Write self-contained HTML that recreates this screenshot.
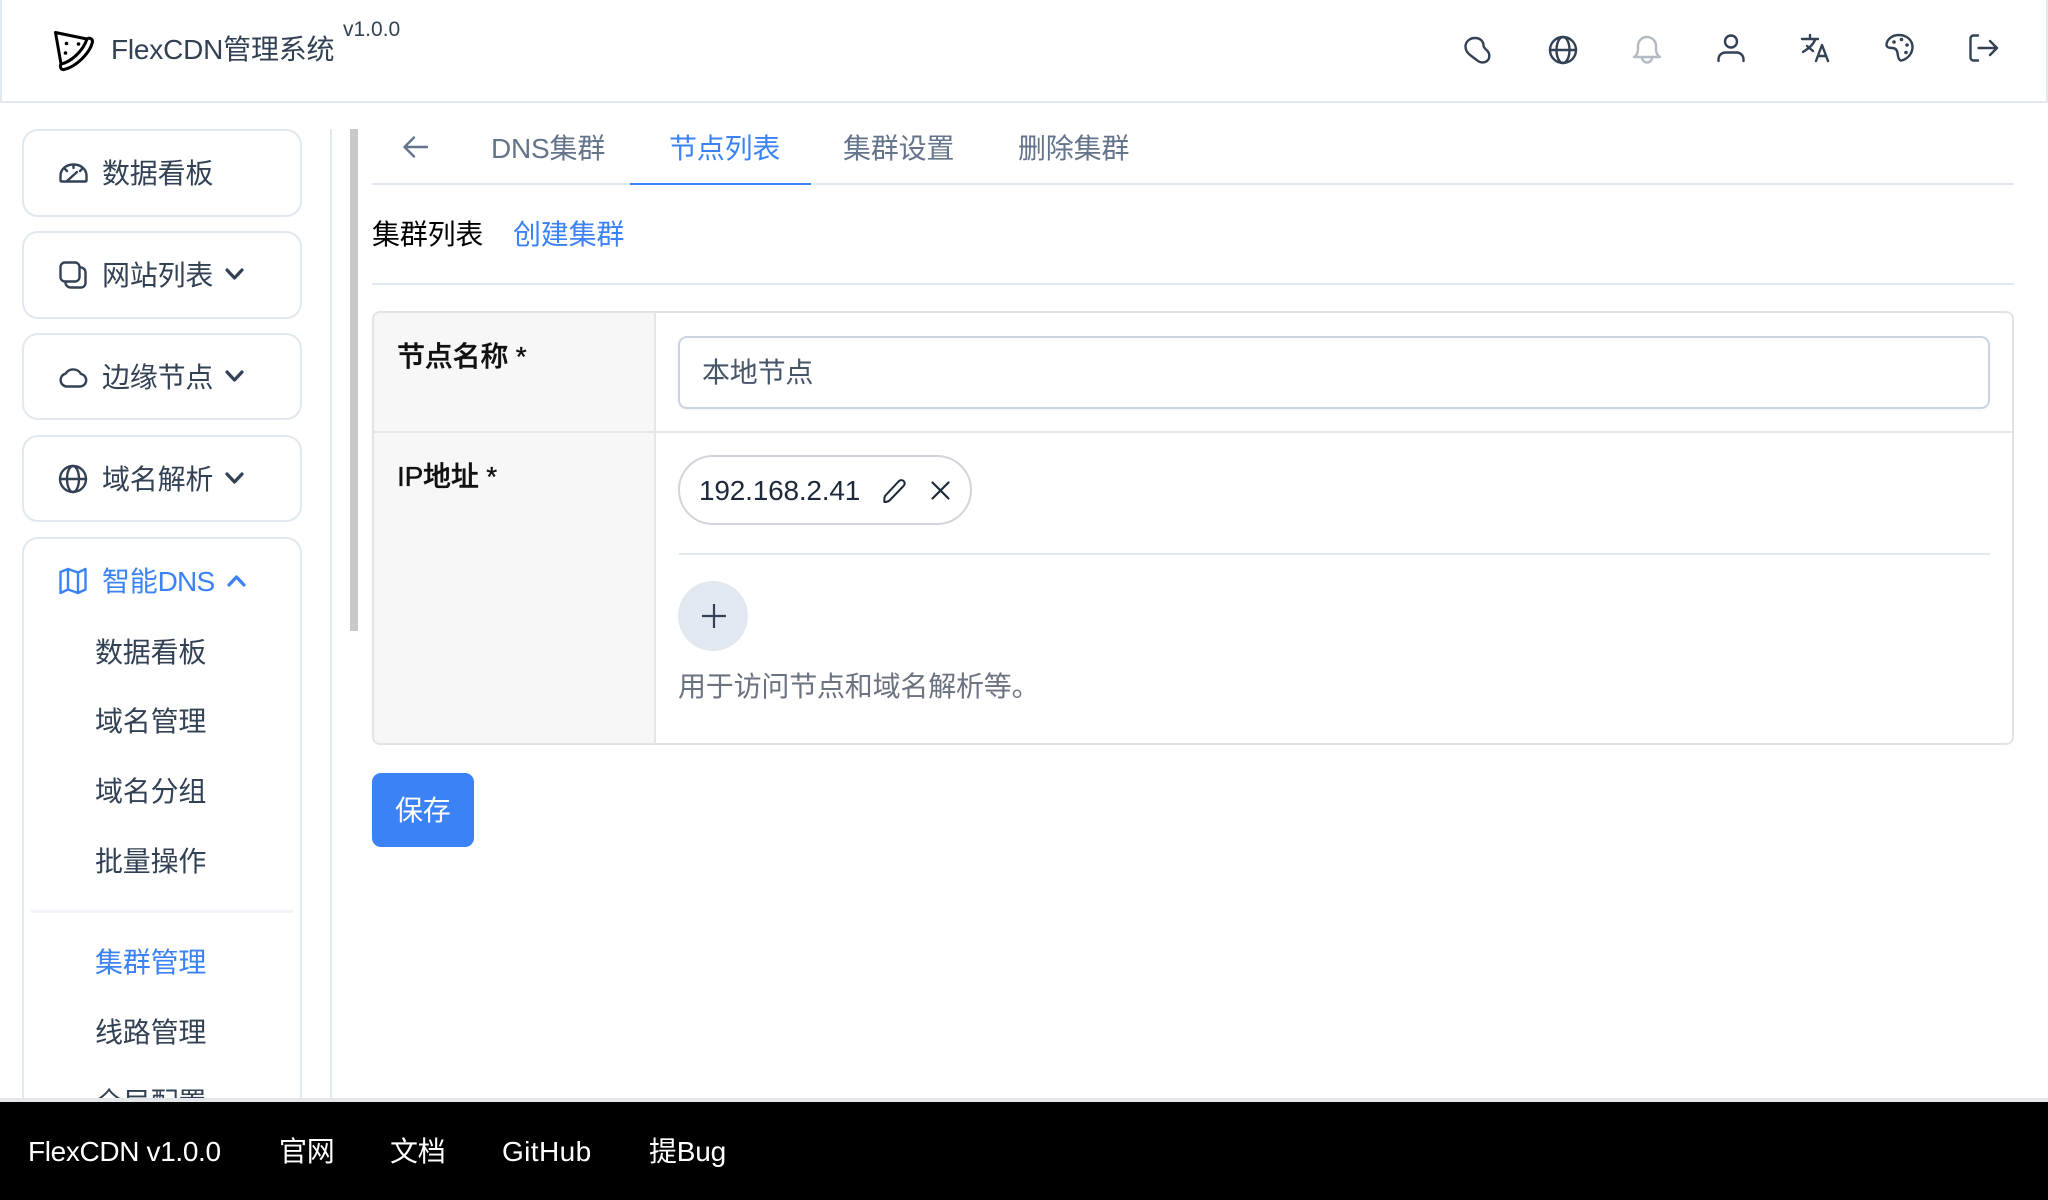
<!DOCTYPE html>
<html lang="zh-CN"><head><meta charset="utf-8"><title>FlexCDN管理系统</title>
<style>
*{box-sizing:border-box;margin:0;padding:0}
html,body{width:2048px;height:1200px;overflow:hidden;background:#fff}
body{position:relative;font-family:"Liberation Sans","Noto Sans CJK SC",sans-serif;font-size:28px;color:#334155}
.a{position:absolute}
.t{position:absolute;line-height:40px;height:40px;white-space:nowrap;margin-top:1px;letter-spacing:-.2px}
svg{position:absolute;fill:none;stroke:#334155;stroke-width:2.4;stroke-linecap:round;stroke-linejoin:round;overflow:visible}
.box{position:absolute;left:22px;width:280px;border:2px solid #e2e8f0;border-radius:16px;background:#fff}
.blue{color:#3b82f6}
.lb{color:#111;font-weight:500;-webkit-text-stroke:.35px #111}
</style></head><body>

<!-- header -->
<div class="a" style="left:0;top:0;width:2048px;height:103px;border:2px solid #e2e8f0;border-top:0"></div>
<svg style="left:54px;top:31px;stroke:#000;stroke-width:3" width="40" height="40" viewBox="0 0 40 40"><path d="M1.500 1.500 L33 8 C35 6 39 8 38.500 11 C36 22 22 36 10 38.500 C7 39 5.500 36 7 33 Z"/><path d="M7 33 C17 31 29 20 33 8"/><g fill="#000" stroke="none"><circle cx="12.500" cy="12.500" r="1.800"/><circle cx="24.500" cy="13" r="1.800"/><circle cx="11.500" cy="22" r="1.800"/></g></svg>
<div class="t" style="left:111px;top:29px;letter-spacing:-.2px">FlexCDN管理系统</div>
<div class="t" style="left:343px;top:9px;font-size:21px;letter-spacing:0">v1.0.0</div>

<svg style="left:1465px;top:37px" width="26" height="27" viewBox="0 0 26 27"><path d="M10 1 C15.500 1 18.500 4.500 18.500 8.500 C18.500 10.500 20 11.500 22 13.500 C25 16.500 25 21 22.500 23.500 C20 26 15.500 26 13 24 C10 21.500 6.500 19.500 3.500 16.500 C1.500 14.500 .5 12 .5 9.500 C.5 4.500 5 1 10 1 Z"/></svg>
<svg style="left:1549px;top:36px" width="28" height="28" viewBox="0 0 28 28"><circle cx="14" cy="14" r="13"/><ellipse cx="14" cy="14" rx="6.500" ry="13"/><path d="M1 14h26"/></svg>
<svg style="left:1633px;top:36px;stroke:#b4bac3" width="28" height="28" viewBox="0 0 28 28"><path d="M1 21h26c-2.500-1.500-4-4-4-8V10a9 9 0 0 0-18 0v3c0 4-1.500 6.500-4 8Z"/><path d="M9 21.500a5 5 0 0 0 10 0"/></svg>
<svg style="left:1717px;top:34px" width="28" height="28" viewBox="0 0 28 28"><circle cx="14" cy="7.500" r="6"/><path d="M1.500 27V25.500C1.500 21 5 18.500 8.500 18.500H19.500C23 18.500 26.500 21 26.500 25.500V27"/></svg>
<svg style="left:1800px;top:34px" width="29" height="28" viewBox="0 0 29 28"><path d="M2 5h16M10 1v4M15 6C13 11 8 15 3 18M7 12l6 5M16 27L22 11L28 27M18 22h8"/></svg>
<svg style="left:1885px;top:34px" width="28" height="28" viewBox="0 0 28 28"><path d="M14 1 C7 1 1.500 5.500 1.500 11 C1.500 13 4 14 7 14 C10 14 12 15.500 12.500 19 C13 23 14 27 16.500 26.500 C23 25 27.500 19 27.500 13 C27.500 6 21.500 1 14 1Z"/><g fill="#334155" stroke="none"><circle cx="9" cy="8" r="1.800"/><circle cx="16.500" cy="5.500" r="1.800"/><circle cx="22" cy="11" r="1.800"/><circle cx="21" cy="18.500" r="1.800"/></g></svg>
<svg style="left:1969px;top:34px" width="29" height="28" viewBox="0 0 29 28"><path d="M9 1.500H4.500a3 3 0 0 0-3 3v19a3 3 0 0 0 3 3H9M9.500 14H28M21 7l7 7-7 7"/></svg>

<!-- sidebar -->
<div class="a" style="left:0;top:129px;width:331px;height:969px;overflow:hidden">
<div class="box" style="top:0;height:88px"></div>
<div class="box" style="top:102px;height:88px"></div>
<div class="box" style="top:204px;height:87px"></div>
<div class="box" style="top:306px;height:87px"></div>
<div class="box" style="top:408px;height:700px"></div>
</div>
<div class="a" style="left:330px;top:129px;width:2px;height:969px;background:#e2e8f0"></div>
<div class="a" style="left:350px;top:129px;width:8px;height:502px;background:#c9c9c9"></div>

<svg style="left:59px;top:163px" width="29" height="20" viewBox="0 0 29 20"><path d="M1.500 17V13C1.500 6 7 1.500 14.500 1.500C22 1.500 27.500 6 27.500 13V17.500A1 1 0 0 1 26.500 18.500H2.500A1 1 0 0 1 1.500 17.500ZM8 18L18 9M14.500 2V5M6 6L8 8M23 6L21 8"/></svg>
<div class="t" style="left:102px;top:153px">数据看板</div>

<svg style="left:59px;top:261px" width="28" height="28" viewBox="0 0 28 28"><rect x="1.500" y="1.500" width="19" height="19" rx="4.500"/><path d="M21 6.500a5 5 0 0 1 5.500 5V22a4.500 4.500 0 0 1-4.500 4.500H11.500A5 5 0 0 1 6.500 21"/></svg>
<div class="t" style="left:102px;top:255px">网站列表</div>
<svg style="left:225px;top:268px;stroke-width:3.200" width="19" height="12" viewBox="0 0 19 12"><path d="M2 2l7.500 8L17 2"/></svg>

<svg style="left:59px;top:366px" width="29" height="22" viewBox="0 0 29 22"><path d="M8 20.500a6.500 6.500 0 0 1-1.500-12.800A9 9 0 0 1 22 8a6.300 6.300 0 0 1-1 12.500Z"/></svg>
<div class="t" style="left:102px;top:357px">边缘节点</div>
<svg style="left:225px;top:370px;stroke-width:3.200" width="19" height="12" viewBox="0 0 19 12"><path d="M2 2l7.500 8L17 2"/></svg>

<svg style="left:59px;top:465px" width="28" height="28" viewBox="0 0 28 28"><circle cx="14" cy="14" r="13"/><ellipse cx="14" cy="14" rx="6" ry="13"/><path d="M1 14h26"/></svg>
<div class="t" style="left:102px;top:459px">域名解析</div>
<svg style="left:225px;top:472px;stroke-width:3.200" width="19" height="12" viewBox="0 0 19 12"><path d="M2 2l7.500 8L17 2"/></svg>

<svg style="left:59px;top:567px;stroke:#3b82f6" width="28" height="28" viewBox="0 0 28 28"><path d="M1.500 5 9 2l10 3.500L26.500 2v20.500L19 26l-10-3.500L1.500 26ZM9 2v20.500M19 5.500V26"/></svg>
<div class="t blue" style="left:102px;top:561px">智能<span style="letter-spacing:-.8px">DNS</span></div>
<svg style="left:227px;top:575px;stroke:#3b82f6;stroke-width:3.200" width="19" height="12" viewBox="0 0 19 12"><path d="M2 10l7.500-8L17 10"/></svg>

<div class="t" style="left:95px;top:632px">数据看板</div>
<div class="t" style="left:95px;top:701px">域名管理</div>
<div class="t" style="left:95px;top:771px">域名分组</div>
<div class="t" style="left:95px;top:841px">批量操作</div>
<div class="a" style="left:31px;top:910px;width:262px;height:3px;background:#f1f5f9"></div>
<div class="t blue" style="left:95px;top:942px">集群管理</div>
<div class="t" style="left:95px;top:1012px">线路管理</div>
<div class="t" style="left:95px;top:1082px">全局配置</div>

<!-- tabs -->
<div class="a" style="left:372px;top:183px;width:1642px;height:2px;background:#e2e8f0"></div>
<div class="a" style="left:630px;top:183px;width:181px;height:2px;background:#3b82f6"></div>
<svg style="left:403px;top:136px;stroke:#64748b;stroke-width:2.400" width="25" height="22" viewBox="0 0 25 22"><path d="M24 11H2M11 1.500 1.500 11 11 20.500"/></svg>
<div class="t" style="left:491px;top:128px;color:#64748b">DNS集群</div>
<div class="t blue" style="left:669px;top:128px">节点列表</div>
<div class="t" style="left:843px;top:128px;color:#64748b">集群设置</div>
<div class="t" style="left:1018px;top:128px;color:#64748b">删除集群</div>

<!-- sub nav -->
<div class="t" style="left:372px;top:214px;color:#000">集群列表</div>
<div class="t blue" style="left:513px;top:214px">创建集群</div>
<div class="a" style="left:372px;top:283px;width:1642px;height:2px;background:#e2e8f0"></div>

<!-- form table -->
<div class="a" style="left:372px;top:311px;width:1642px;height:434px;border:2px solid #e3e3e3;border-radius:8px;overflow:hidden">
  <div class="a" style="left:0;top:0;width:282px;height:430px;background:#f7f7f7;border-right:2px solid #e6e6e6"></div>
  <div class="a" style="left:0;top:118px;width:1640px;height:2px;background:#e6e6e6"></div>
</div>
<div class="t lb" style="left:397px;top:336px">节点名称 *</div>
<div class="t lb" style="left:397px;top:456px">IP地址 *</div>

<div class="a" style="left:678px;top:336px;width:1312px;height:73px;border:2px solid #cbd5e1;border-radius:9px;box-shadow:0 1px 2px rgba(0,0,0,.06)"></div>
<div class="t" style="left:702px;top:352px;color:#475569">本地节点</div>

<div class="a" style="left:678px;top:455px;width:294px;height:70px;border:2px solid #d1d5db;border-radius:35px"></div>
<div class="t" style="left:699px;top:470px;color:#1e293b;font-size:28px;letter-spacing:-.2px">192.168.2.41</div>
<svg style="left:882px;top:478px;stroke:#1e293b;stroke-width:2" width="25" height="25" viewBox="0 0 25 25"><path d="M3 18 16.500 3.500c2-2 4.500-1.500 5.500 0s1 3-.5 4.500L8 22c-1 1-3 2-5.500 2-.5-2 0-4.500.5-6Z"/></svg>
<svg style="left:931px;top:481px;stroke:#1e293b;stroke-width:2.200" width="19" height="19" viewBox="0 0 19 19"><path d="M1.500 1.500l16 16M17.500 1.500l-16 16"/></svg>

<div class="a" style="left:679px;top:553px;width:1311px;height:2px;background:#e2e8f0"></div>
<div class="a" style="left:678px;top:581px;width:70px;height:70px;border-radius:50%;background:#e2e8f0"></div>
<svg style="left:702px;top:604px;stroke-width:2.200;stroke-linecap:butt" width="24" height="24" viewBox="0 0 24 24"><path d="M12 0v24M0 12h24"/></svg>
<div class="t" style="left:678px;top:666px;color:#6b7280">用于访问节点和域名解析等。</div>

<div class="a" style="left:372px;top:773px;width:102px;height:74px;border-radius:9px;background:#3b82f6"></div>
<div class="t" style="left:395px;top:790px;color:#fff">保存</div>

<!-- footer -->
<div class="a" style="left:0;top:1098px;width:2048px;height:4px;background:#e5e7eb"></div>
<div class="a" style="left:0;top:1102px;width:2048px;height:98px;background:#000"></div>
<div class="t" style="left:28px;top:1131px;color:#fff;letter-spacing:-.35px">FlexCDN v1.0.0</div>
<div class="t" style="left:279px;top:1131px;color:#fff">官网</div>
<div class="t" style="left:390px;top:1131px;color:#fff">文档</div>
<div class="t" style="left:502px;top:1131px;color:#fff;letter-spacing:.4px">GitHub</div>
<div class="t" style="left:649px;top:1131px;color:#fff">提Bug</div>
</body></html>
